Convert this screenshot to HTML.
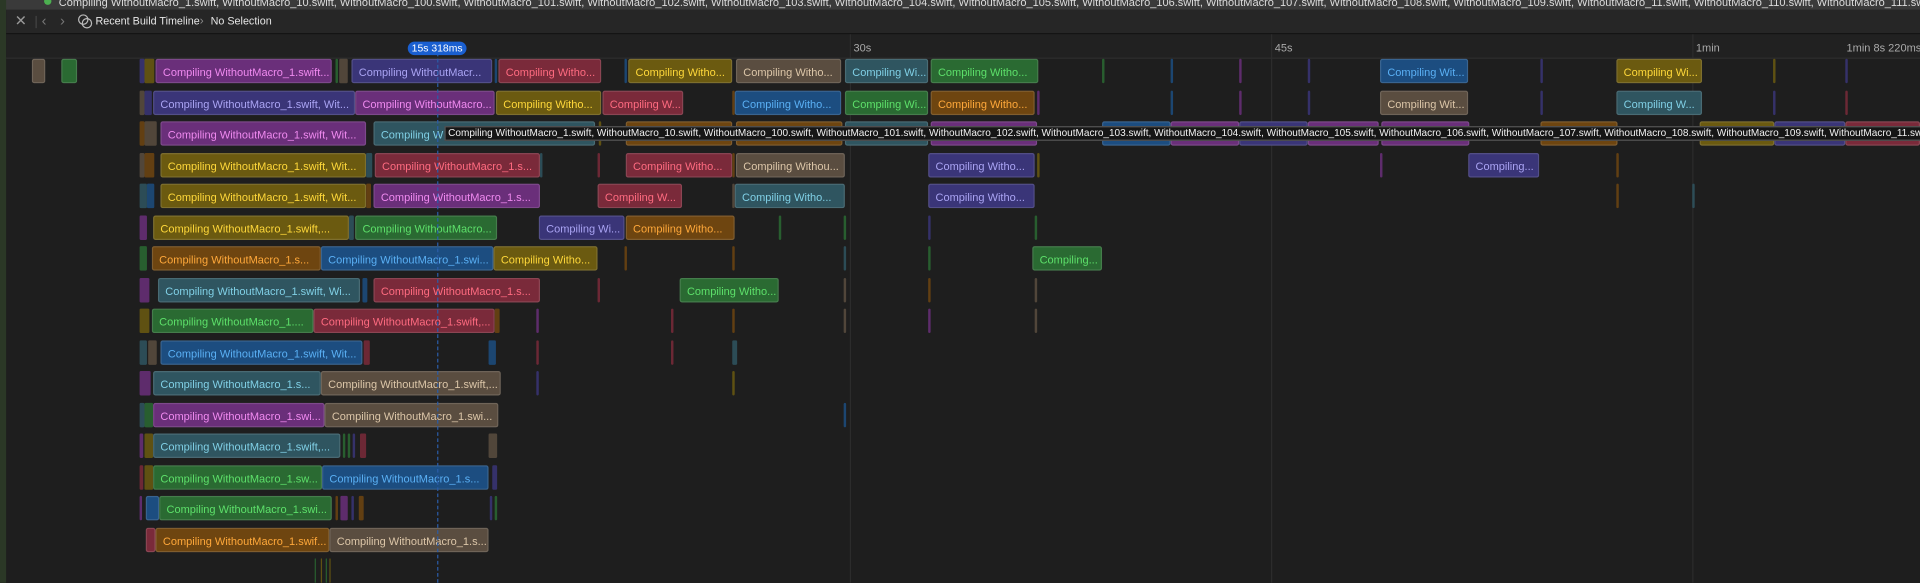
<!DOCTYPE html>
<html><head><meta charset="utf-8"><style>
html,body{margin:0;padding:0;width:1920px;height:583px;overflow:hidden;background:#1e1e1e}
#w{position:absolute;left:0;top:0;width:1568px;height:476px;transform:scale(1.2244898);transform-origin:0 0;font-family:"Liberation Sans",sans-serif;background:#1e1e1e;overflow:hidden}
.top{position:absolute;left:0;top:0;width:1568px;height:8px;background:#3a3a3a;overflow:hidden;color:#ddd;font-size:9px;line-height:2px;white-space:nowrap}
.edge{position:absolute;left:0;top:0;width:5px;height:476px;background:#2b3826}
.tb{position:absolute;left:5px;top:8px;width:1563px;height:19px;background:#262626;border-bottom:1px solid #141414;color:#e6e6e6;font-size:8.8px;line-height:19px;white-space:nowrap}
.ruler{position:absolute;left:5px;top:28px;width:1563px;height:19px;background:#212121;border-bottom:1px solid #2e2e2e}
.lbl{position:absolute;top:34px;font-size:9px;color:#aaa;white-space:nowrap}
.grid{position:absolute;top:28px;width:1px;height:448px;background:#2c2c2c}
.row{position:absolute;left:0;width:1568px;height:22px}
.b{position:absolute;top:0;height:20px;border:1px solid rgba(255,255,255,.13);border-radius:2px;font-size:9px;line-height:20px;padding-left:5px;padding-right:2px;box-sizing:border-box;white-space:nowrap;overflow:hidden;text-overflow:clip}
.b.n{padding:0}
.pu{background:#6a2f7a;color:#f08af0}
.nv{background:#3a3578;color:#aaa4f4}
.rd{background:#7a2a3a;color:#ff6b80}
.ye{background:#6b5a10;color:#ffd83a}
.br{background:#5a4d40;color:#dcc6a8}
.te{background:#2f5560;color:#80d0e6}
.gr{background:#2a6a32;color:#5de06a}
.or{background:#6e4510;color:#ffa83a}
.bl{background:#1c4d80;color:#5ab0f5}
.t{position:absolute;top:0;height:20px;width:2px;border-radius:1px;opacity:.85}
</style></head><body><div id="w">
<div class="top"><span style="position:absolute;left:36px;top:-2px;width:6px;height:6px;border-radius:3px;background:#4caf50"></span><span style="position:absolute;left:48px;top:1px">Compiling WithoutMacro_1.swift, WithoutMacro_10.swift, WithoutMacro_100.swift, WithoutMacro_101.swift, WithoutMacro_102.swift, WithoutMacro_103.swift, WithoutMacro_104.swift, WithoutMacro_105.swift, WithoutMacro_106.swift, WithoutMacro_107.swift, WithoutMacro_108.swift, WithoutMacro_109.swift, WithoutMacro_11.swift, WithoutMacro_110.swift, WithoutMacro_111.swift</span></div>
<div class="edge"></div>
<div class="tb">
<span style="position:absolute;left:7px;color:#999;font-size:12px">✕</span>
<span style="position:absolute;left:24px;width:1px;height:10px;top:5px;background:#444"></span>
<span style="position:absolute;left:29px;color:#777;font-size:12px">‹</span>
<span style="position:absolute;left:44px;color:#777;font-size:12px">›</span>
<svg style="position:absolute;left:58px;top:3px" width="13" height="13" viewBox="0 0 13 13"><circle cx="5" cy="5" r="3.8" fill="none" stroke="#bbb" stroke-width="1"/><circle cx="8" cy="8" r="3.8" fill="none" stroke="#bbb" stroke-width="1"/></svg>
<span style="position:absolute;left:73px">Recent Build Timeline</span>
<span style="position:absolute;left:158px;color:#888;font-size:10px">›</span>
<span style="position:absolute;left:167px">No Selection</span>
</div>
<div class="ruler"></div>
<div class="grid" style="left:694px"></div><div class="grid" style="left:1038px"></div><div class="grid" style="left:1382px"></div>
<div class="lbl" style="left:697px">30s</div><div class="lbl" style="left:1041px">45s</div><div class="lbl" style="left:1385px">1min</div><div class="lbl" style="left:1508px">1min 8s 220ms</div>
<div style="position:absolute;left:357px;top:43px;width:0;height:433px;border-left:1px dashed #2a5ca8;z-index:3"></div>
<div style="position:absolute;left:333px;top:34px;width:48px;height:11px;border-radius:6px;background:#1a5fd0;color:#fff;font-size:8.5px;line-height:11px;text-align:center;z-index:4;white-space:nowrap">15s 318ms</div>

<div class="row" style="top:48px">
<div class="b n br" style="left:26px;width:11px"></div><div class="b n gr" style="left:50px;width:13px"></div>
<div class="t nv" style="left:114px;width:4px"></div><div class="t ye" style="left:118px;width:8px"></div>
<div class="b pu" style="left:127px;width:144px">Compiling WithoutMacro_1.swift...</div>
<div class="t gr" style="left:274px"></div><div class="t br" style="left:277px;width:7px"></div>
<div class="b nv" style="left:287px;width:115px">Compiling WithoutMacr...</div>
<div class="t bl" style="left:404px"></div>
<div class="b rd" style="left:407px;width:84px">Compiling Witho...</div>
<div class="t bl" style="left:510px"></div>
<div class="b ye" style="left:513px;width:85px">Compiling Witho...</div>
<div class="b br" style="left:601px;width:86px">Compiling Witho...</div>
<div class="b te" style="left:690px;width:68px">Compiling Wi...</div>
<div class="b gr" style="left:760px;width:88px">Compiling Witho...</div>
<div class="t gr" style="left:900px"></div><div class="t bl" style="left:956px"></div><div class="t pu" style="left:1012px"></div><div class="t nv" style="left:1068px"></div>
<div class="b bl" style="left:1127px;width:72px">Compiling Wit...</div>
<div class="t nv" style="left:1258px"></div>
<div class="b ye" style="left:1320px;width:70px">Compiling Wi...</div>
<div class="t ye" style="left:1448px"></div><div class="t nv" style="left:1507px"></div>
</div>

<div class="row" style="top:73.5px">
<div class="t br" style="left:114px;width:4px"></div><div class="t nv" style="left:118px;width:6px"></div>
<div class="b nv" style="left:125px;width:165px">Compiling WithoutMacro_1.swift, Wit...</div>
<div class="b pu" style="left:290px;width:114px">Compiling WithoutMacro...</div>
<div class="b ye" style="left:405px;width:86px">Compiling Witho...</div>
<div class="b rd" style="left:492px;width:66px">Compiling W...</div>
<div class="t or" style="left:598px"></div>
<div class="b bl" style="left:600px;width:87px">Compiling Witho...</div>
<div class="b gr" style="left:690px;width:68px">Compiling Wi...</div>
<div class="b or" style="left:760px;width:85px">Compiling Witho...</div>
<div class="t pu" style="left:847px"></div>
<div class="t bl" style="left:956px"></div><div class="t pu" style="left:1012px"></div><div class="t nv" style="left:1068px"></div>
<div class="b br" style="left:1127px;width:72px">Compiling Wit...</div>
<div class="t nv" style="left:1258px"></div>
<div class="b te" style="left:1320px;width:70px">Compiling W...</div>
<div class="t nv" style="left:1448px"></div><div class="t rd" style="left:1507px"></div>
</div>

<div class="row" style="top:99px">
<div class="t or" style="left:114px;width:4px"></div><div class="t br" style="left:118px;width:10px"></div>
<div class="b pu" style="left:131px;width:168px">Compiling WithoutMacro_1.swift, Wit...</div>
<div class="b te" style="left:305px;width:181px">Compiling W</div>
<div class="t ye" style="left:489px"></div>
<div class="b n or" style="left:511px;width:87px"></div>
<div class="b n or" style="left:601px;width:87px"></div>
<div class="b n te" style="left:690px;width:68px"></div>
<div class="b n pu" style="left:760px;width:87px"></div>
<div class="b n bl" style="left:900px;width:56px"></div>
<div class="b n pu" style="left:956px;width:56px"></div>
<div class="b n nv" style="left:1012px;width:56px"></div>
<div class="b n pu" style="left:1068px;width:58px"></div>
<div class="b n pu" style="left:1128px;width:72px"></div>
<div class="b n or" style="left:1258px;width:63px"></div>
<div class="b n ye" style="left:1388px;width:61px"></div>
<div class="b n nv" style="left:1449px;width:58px"></div>
<div class="b n rd" style="left:1507px;width:61px"></div>
<div style="position:absolute;left:363px;top:4px;width:1210px;height:12px;background:#161616;border:1px solid #555;box-sizing:border-box;color:#f2f2f2;font-size:8.2px;line-height:10px;padding-left:2px;white-space:nowrap;overflow:hidden;z-index:5">Compiling WithoutMacro_1.swift, WithoutMacro_10.swift, WithoutMacro_100.swift, WithoutMacro_101.swift, WithoutMacro_102.swift, WithoutMacro_103.swift, WithoutMacro_104.swift, WithoutMacro_105.swift, WithoutMacro_106.swift, WithoutMacro_107.swift, WithoutMacro_108.swift, WithoutMacro_109.swift, WithoutMacro_11.swift, WithoutMacro_110.swift</div>
</div>

<div class="row" style="top:124.5px">
<div class="t br" style="left:114px;width:4px"></div><div class="t or" style="left:118px;width:8px"></div>
<div class="b ye" style="left:131px;width:168px">Compiling WithoutMacro_1.swift, Wit...</div>
<div class="t te" style="left:299px;width:5px"></div>
<div class="b rd" style="left:306px;width:135px">Compiling WithoutMacro_1.s...</div>
<div class="t te" style="left:441px"></div><div class="t rd" style="left:488px"></div>
<div class="b rd" style="left:511px;width:87px">Compiling Witho...</div>
<div class="t or" style="left:598px"></div>
<div class="b br" style="left:601px;width:89px">Compiling Withou...</div>
<div class="b nv" style="left:758px;width:87px">Compiling Witho...</div>
<div class="t ye" style="left:847px"></div><div class="t pu" style="left:1127px"></div>
<div class="b nv" style="left:1199px;width:58px">Compiling...</div>
<div class="t or" style="left:1320px"></div>
</div>

<div class="row" style="top:150px">
<div class="t te" style="left:114px;width:6px"></div><div class="t bl" style="left:120px;width:6px"></div>
<div class="b ye" style="left:131px;width:168px">Compiling WithoutMacro_1.swift, Wit...</div>
<div class="t or" style="left:299px;width:4px"></div>
<div class="b pu" style="left:305px;width:136px">Compiling WithoutMacro_1.s...</div>
<div class="b rd" style="left:488px;width:69px">Compiling W...</div>
<div class="t br" style="left:598px"></div>
<div class="b te" style="left:600px;width:90px">Compiling Witho...</div>
<div class="b nv" style="left:758px;width:87px">Compiling Witho...</div>
<div class="t or" style="left:1320px"></div><div class="t te" style="left:1382px"></div>
</div>

<div class="row" style="top:175.5px">
<div class="t pu" style="left:114px;width:6px"></div>
<div class="b ye" style="left:125px;width:160px">Compiling WithoutMacro_1.swift,...</div>
<div class="t te" style="left:285px;width:4px"></div>
<div class="b gr" style="left:290px;width:116px">Compiling WithoutMacro...</div>
<div class="b nv" style="left:440px;width:70px">Compiling Wi...</div>
<div class="b or" style="left:511px;width:89px">Compiling Witho...</div>
<div class="t gr" style="left:636px"></div><div class="t gr" style="left:689px"></div><div class="t nv" style="left:758px"></div><div class="t gr" style="left:845px"></div>
</div>

<div class="row" style="top:201px">
<div class="t gr" style="left:114px;width:6px"></div>
<div class="b or" style="left:124px;width:138px">Compiling WithoutMacro_1.s...</div>
<div class="b bl" style="left:262px;width:141px">Compiling WithoutMacro_1.swi...</div>
<div class="b ye" style="left:403px;width:85px">Compiling Witho...</div>
<div class="t or" style="left:510px"></div><div class="t or" style="left:598px"></div><div class="t te" style="left:689px"></div><div class="t gr" style="left:758px"></div>
<div class="b gr" style="left:843px;width:57px">Compiling...</div>
</div>

<div class="row" style="top:226.5px">
<div class="t pu" style="left:114px;width:8px"></div>
<div class="b te" style="left:129px;width:165px">Compiling WithoutMacro_1.swift, Wi...</div>
<div class="t bl" style="left:296px;width:4px"></div>
<div class="b rd" style="left:305px;width:136px">Compiling WithoutMacro_1.s...</div>
<div class="t rd" style="left:488px"></div>
<div class="b gr" style="left:555px;width:81px">Compiling Witho...</div>
<div class="t br" style="left:689px"></div><div class="t or" style="left:758px"></div><div class="t br" style="left:845px"></div>
</div>

<div class="row" style="top:252px">
<div class="t ye" style="left:114px;width:8px"></div>
<div class="b gr" style="left:124px;width:132px">Compiling WithoutMacro_1....</div>
<div class="b rd" style="left:256px;width:148px">Compiling WithoutMacro_1.swift,...</div>
<div class="t or" style="left:404px;width:4px"></div>
<div class="t pu" style="left:438px"></div><div class="t rd" style="left:548px"></div><div class="t or" style="left:598px"></div><div class="t br" style="left:689px"></div><div class="t pu" style="left:758px"></div><div class="t br" style="left:845px"></div>
</div>

<div class="row" style="top:277.5px">
<div class="t te" style="left:114px;width:6px"></div><div class="t br" style="left:121px;width:7px"></div>
<div class="b bl" style="left:131px;width:165px">Compiling WithoutMacro_1.swift, Wit...</div>
<div class="t rd" style="left:297px;width:5px"></div>
<div class="t bl" style="left:399px;width:6px"></div>
<div class="t rd" style="left:438px"></div><div class="t rd" style="left:548px"></div><div class="t te" style="left:598px;width:4px"></div>
</div>

<div class="row" style="top:303px">
<div class="t pu" style="left:114px;width:9px"></div>
<div class="b te" style="left:125px;width:137px">Compiling WithoutMacro_1.s...</div>
<div class="b br" style="left:262px;width:147px">Compiling WithoutMacro_1.swift,...</div>
<div class="t nv" style="left:438px"></div><div class="t ye" style="left:598px"></div>
</div>

<div class="row" style="top:328.5px">
<div class="t te" style="left:114px;width:4px"></div><div class="t gr" style="left:118px;width:7px"></div>
<div class="b pu" style="left:125px;width:140px">Compiling WithoutMacro_1.swi...</div>
<div class="b br" style="left:265px;width:142px">Compiling WithoutMacro_1.swi...</div>
<div class="t bl" style="left:689px"></div>
</div>

<div class="row" style="top:354px">
<div class="t pu" style="left:114px;width:3px"></div><div class="t ye" style="left:118px;width:7px"></div>
<div class="b te" style="left:125px;width:153px">Compiling WithoutMacro_1.swift,...</div>
<div class="t gr" style="left:280px"></div><div class="t gr" style="left:284px"></div><div class="t nv" style="left:288px"></div><div class="t rd" style="left:294px;width:5px"></div>
<div class="t br" style="left:399px;width:7px"></div>
</div>

<div class="row" style="top:379.5px">
<div class="t rd" style="left:114px;width:3px"></div><div class="t ye" style="left:118px;width:7px"></div>
<div class="b gr" style="left:125px;width:138px">Compiling WithoutMacro_1.sw...</div>
<div class="b bl" style="left:263px;width:136px">Compiling WithoutMacro_1.s...</div>
<div class="t nv" style="left:402px;width:4px"></div>
</div>

<div class="row" style="top:405px">
<div class="t pu" style="left:114px;width:2px"></div>
<div class="b n bl" style="left:119px;width:11px"></div>
<div class="b gr" style="left:130px;width:141px">Compiling WithoutMacro_1.swi...</div>
<div class="t or" style="left:274px"></div><div class="t pu" style="left:278px;width:6px"></div><div class="t nv" style="left:287px"></div><div class="t or" style="left:293px;width:4px"></div>
<div class="t nv" style="left:400px"></div><div class="t gr" style="left:404px"></div>
</div>

<div class="row" style="top:430.5px">
<div class="b n rd" style="left:119px;width:8px"></div>
<div class="b or" style="left:127px;width:142px">Compiling WithoutMacro_1.swif...</div>
<div class="b br" style="left:269px;width:130px">Compiling WithoutMacro_1.s...</div>
</div>

<div class="row" style="top:456px">
<div class="t gr" style="left:257px;width:1px"></div><div class="t ye" style="left:262px;width:1px"></div><div class="t gr" style="left:266px;width:1px"></div><div class="t ye" style="left:269px;width:1px"></div>
</div>
</div></body></html>
